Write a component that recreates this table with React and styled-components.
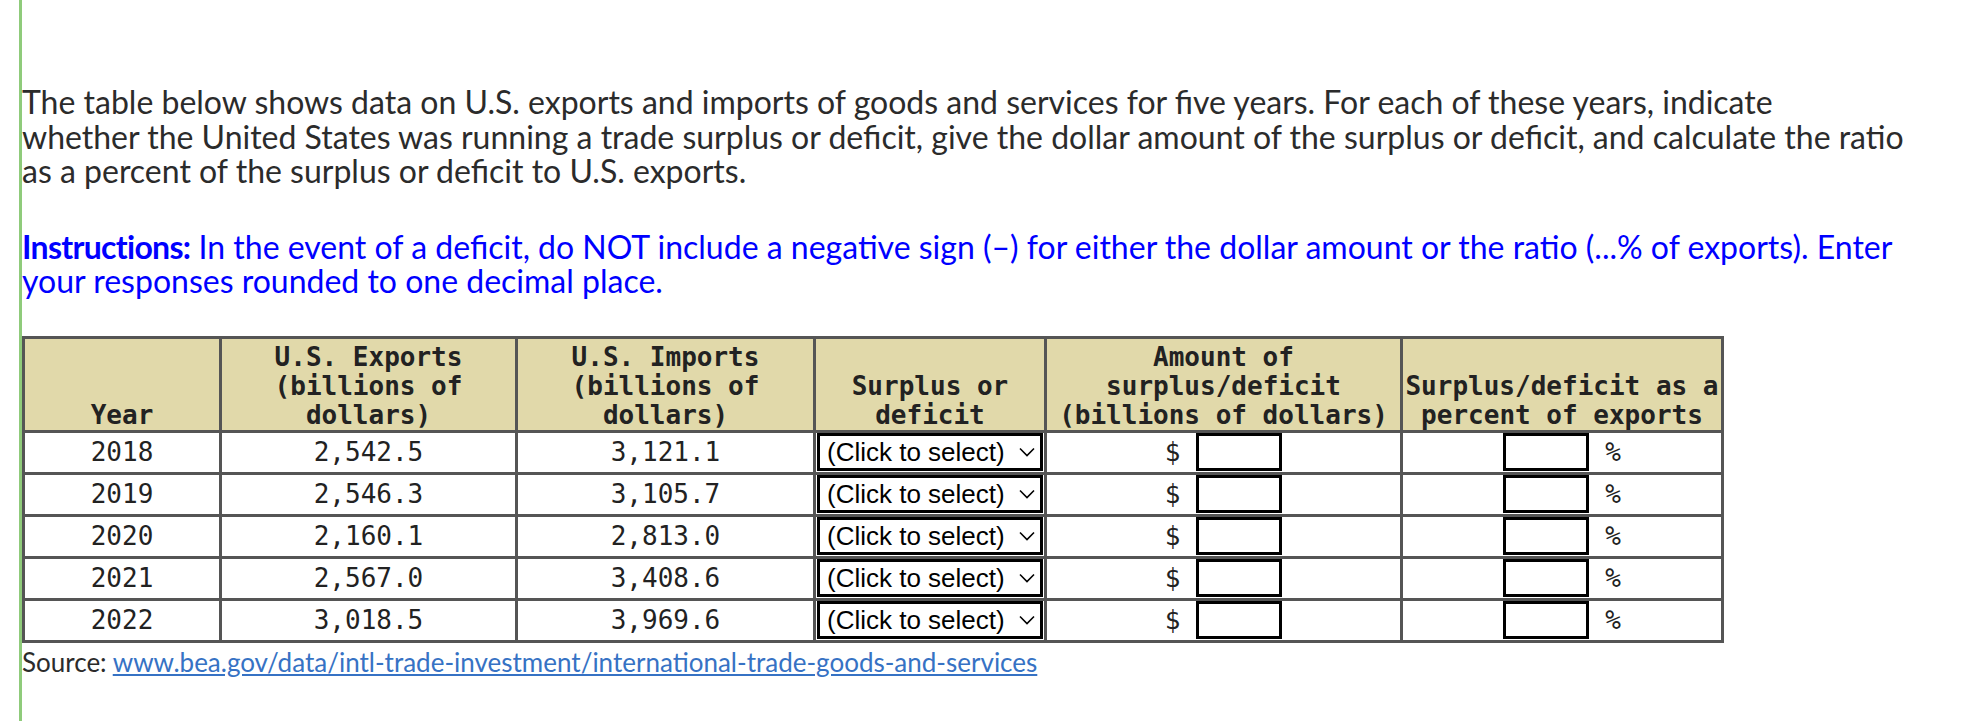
import React from "react";
import styled, { createGlobalStyle } from "styled-components";

const GlobalStyle = createGlobalStyle`
  html, body {
    margin: 0;
    padding: 0;
    background: #ffffff;
  }
  * {
    box-sizing: border-box;
  }
`;

const Page = styled.div`
  margin-left: 19px;
  border-left: 3px solid #8fcb7b;
  min-height: 100vh;
  padding-top: 85px;
  font-family: "Lato", "Liberation Sans", sans-serif;
  color: #2b2b2b;
`;

const Para = styled.p`
  margin: 0 0 ${(p) => (p.gap ? p.gap : 0)}px 0;
  max-width: 1940px;
  font-size: 32px;
  line-height: 34.6px;
  color: ${(p) => (p.blue ? "#0000ff" : "#2b2b2b")};
`;

const Strong = styled.strong`
  font-weight: 700;
  letter-spacing: -0.7px;
`;

const Table = styled.table`
  border-collapse: collapse;
  table-layout: fixed;
  width: 1699px;
  border: 3px solid #333;
  font-family: "DejaVu Sans Mono", "Liberation Mono", monospace;
  font-size: 26px;
  color: #222;
`;

const Th = styled.th`
  background: #e1d9aa;
  border: 3px solid #555;
  font-weight: 700;
  line-height: 29px;
  height: 94px;
  padding: 0 1px;
  text-align: center;
  vertical-align: bottom;
`;

const Td = styled.td`
  border: 3px solid #555;
  height: 42px;
  padding: 0 1px;
  line-height: 30px;
  text-align: center;
  vertical-align: middle;
  white-space: nowrap;
`;

const Select = styled.div`
  display: flex;
  align-items: center;
  justify-content: space-between;
  height: 38px;
  border: 3px solid #000;
  background: #fff;
  padding: 0 5px 0 7px;
  font-family: "Liberation Sans", Arial, sans-serif;
  font-size: 26px;
  color: #000;
`;

const Entry = styled.div`
  display: flex;
  justify-content: center;
  align-items: center;
  gap: 16px;
  height: 38px;
`;

const Box = styled.span`
  display: block;
  width: 86px;
  height: 38px;
  border: 3px solid #000;
  background: #fff;
`;

const Source = styled.div`
  margin-top: 2px;
  font-size: 26px;
  line-height: 34.6px;
  color: #2b2b2b;
`;

const Link = styled.a`
  color: #3672c4;
  text-decoration: underline;
`;

const rows = [
  ["2018", "2,542.5", "3,121.1"],
  ["2019", "2,546.3", "3,105.7"],
  ["2020", "2,160.1", "2,813.0"],
  ["2021", "2,567.0", "3,408.6"],
  ["2022", "3,018.5", "3,969.6"],
];

const Chevron = () => (
  <svg width="16" height="10" viewBox="0 0 16 10">
    <path d="M1 1.5 L8 8.5 L15 1.5" fill="none" stroke="#000" strokeWidth="1.6" />
  </svg>
);

export default function App() {
  return (
    <>
      <GlobalStyle />
      <Page>
        <Para gap={41}>
          The table below shows data on U.S. exports and imports of goods and services for five years. For each of these years, indicate
          <br />
          whether the United States was running a trade surplus or deficit, give the dollar amount of the surplus or deficit, and calculate the ratio
          <br />
          as a percent of the surplus or deficit to U.S. exports.
        </Para>
        <Para blue gap={37}>
          <Strong>Instructions:</Strong> In the event of a deficit, do NOT include a negative sign (–) for either the dollar amount or the ratio (...% of exports). Enter
          <br />
          your responses rounded to one decimal place.
        </Para>
        <Table>
          <colgroup>
            <col style={{ width: 197 }} />
            <col style={{ width: 296 }} />
            <col style={{ width: 298 }} />
            <col style={{ width: 231 }} />
            <col style={{ width: 356 }} />
            <col style={{ width: 321 }} />
          </colgroup>
          <thead>
            <tr>
              <Th>Year</Th>
              <Th>
                U.S. Exports
                <br />
                (billions of
                <br />
                dollars)
              </Th>
              <Th>
                U.S. Imports
                <br />
                (billions of
                <br />
                dollars)
              </Th>
              <Th>
                Surplus or
                <br />
                deficit
              </Th>
              <Th>
                Amount of
                <br />
                surplus/deficit
                <br />
                (billions of dollars)
              </Th>
              <Th>
                Surplus/deficit as a
                <br />
                percent of exports
              </Th>
            </tr>
          </thead>
          <tbody>
            {rows.map(([year, exp, imp]) => (
              <tr key={year}>
                <Td>{year}</Td>
                <Td>{exp}</Td>
                <Td>{imp}</Td>
                <Td>
                  <Select>
                    <span>(Click to select)</span>
                    <Chevron />
                  </Select>
                </Td>
                <Td>
                  <Entry>
                    <span>$</span>
                    <Box />
                  </Entry>
                </Td>
                <Td>
                  <Entry>
                    <Box />
                    <span>%</span>
                  </Entry>
                </Td>
              </tr>
            ))}
          </tbody>
        </Table>
        <Source>
          Source:{" "}
          <Link href="#">www.bea.gov/data/intl-trade-investment/international-trade-goods-and-services</Link>
        </Source>
      </Page>
    </>
  );
}
